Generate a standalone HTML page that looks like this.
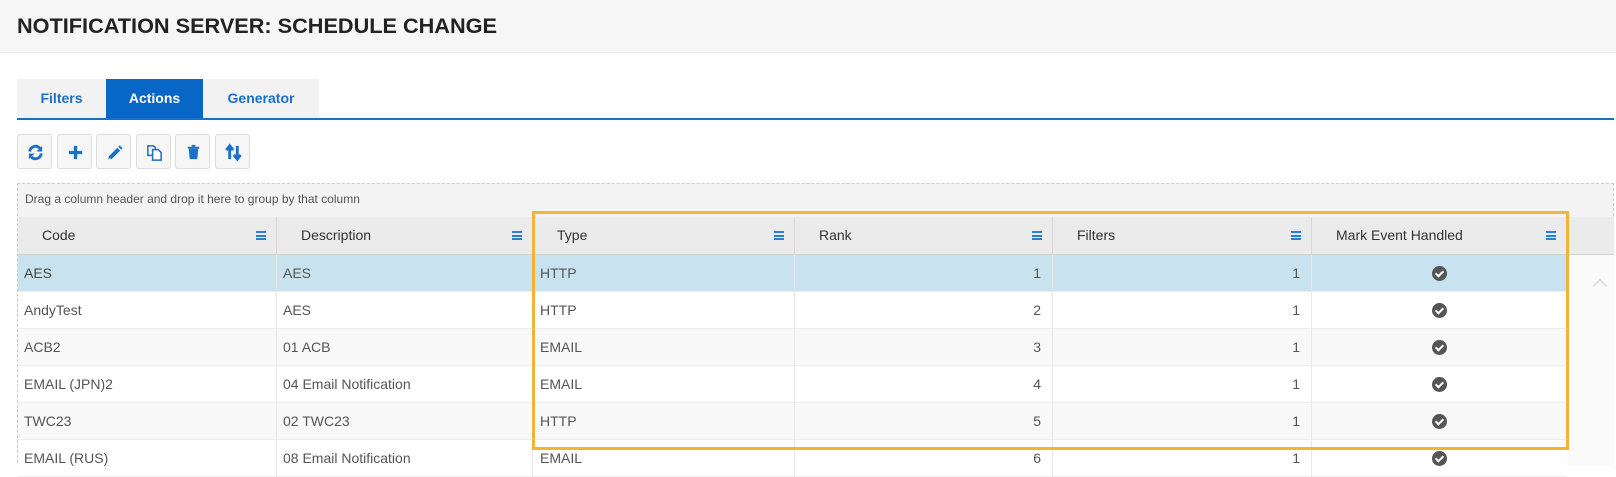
<!DOCTYPE html>
<html><head><meta charset="utf-8"><style>
*{box-sizing:border-box;margin:0;padding:0}
body{width:1616px;height:458px;overflow:hidden;background:#fff;font-family:"Liberation Sans",Arial,sans-serif;position:relative;color:#444}
.hdr{position:absolute;left:0;top:0;width:1616px;height:53px;background:#f6f6f6;border-bottom:1px solid #ececec}
.hdr h1{position:absolute;left:17px;top:13px;font-size:21.7px;font-weight:bold;color:#222;letter-spacing:0}
.tab{position:absolute;top:79px;height:39px;background:#f2f2f2;color:#1a6fc9;font-weight:bold;font-size:14px;line-height:39px;text-align:center}
.tab.act{background:#0866c6;color:#fff}
.line{position:absolute;left:17px;top:118px;width:1597px;height:2px;background:#1b6fc4}
.btn{position:absolute;top:134px;width:35px;height:35px;border:1px solid #ddd;border-radius:3px;background:#f6f6f6}
.btn svg{position:absolute;left:8px;top:8px}
.grid{position:absolute;left:17px;top:183px;width:1597px;height:280px;border:1px dashed #ccc;border-bottom:none;background:#f4f4f4}
.grp{position:absolute;left:25px;top:192px;font-size:12px;color:#555}
.th{position:absolute;top:217px;height:38px;background:#ebebeb;border-bottom:1px solid #d3d3d3;border-right:1px solid #d8d8d8;font-size:14px;color:#333;line-height:37px;padding-left:24px}
.th i{position:absolute;right:10px;top:14px;width:10px;height:9px;border-top:2px solid #2b7fd4;border-bottom:2px solid #2b7fd4}
.th i:after{content:"";position:absolute;left:0;top:1.5px;width:10px;height:2px;background:#2b7fd4}
.row{position:absolute;left:18px;width:1549px;height:37px;border-bottom:1px solid #eee}
.c{position:absolute;top:0;height:37px;line-height:37px;font-size:14px;color:#555;border-right:1px solid #e8e8e8}
.r{text-align:right;padding-right:11px}
.chk{position:absolute;left:50%;top:11px;margin-left:-8px;width:15px;height:15px;border-radius:50%;background:#555}
.chk:after{content:"";position:absolute;left:5px;top:3px;width:3px;height:6px;border:solid #fff;border-width:0 2px 2px 0;transform:rotate(45deg)}
.orange{position:absolute;left:532px;top:211px;width:1037px;height:239px;border:3px solid #f5b335}
</style></head><body>
<div class="hdr"><h1>NOTIFICATION SERVER: SCHEDULE CHANGE</h1></div>
<div class="tab" style="left:17px;width:89px">Filters</div>
<div class="tab act" style="left:106px;width:97px">Actions</div>
<div class="tab" style="left:203px;width:116px">Generator</div>
<div class="line"></div>

<div class="btn" style="left:17px"><svg width="19" height="19" viewBox="0 0 20 20"><path d="M4 9a6 6 0 0 1 10.5-3.5" stroke="#1a6fc9" stroke-width="3" fill="none"/><path d="M17 3v6h-6z" fill="#1a6fc9"/><path d="M16 11a6 6 0 0 1-10.5 3.5" stroke="#1a6fc9" stroke-width="3" fill="none"/><path d="M3 17v-6h6z" fill="#1a6fc9"/></svg></div>
<div class="btn" style="left:57px"><svg width="19" height="19" viewBox="0 0 20 20"><path d="M10 3v14M3 10h14" stroke="#1a6fc9" stroke-width="3.5"/></svg></div>
<div class="btn" style="left:96px"><svg width="19" height="19" viewBox="0 0 20 20"><path d="M5 16l-1.5 1.5 0.5-3.5L13 5l3 3-9 9z" fill="#1a6fc9"/><path d="M14 4l1.5-1.5 3 3L17 7z" fill="#1a6fc9"/></svg></div>
<div class="btn" style="left:136px"><svg width="19" height="19" viewBox="0 0 20 20"><path d="M3 3h6l2 2v8H3z" fill="none" stroke="#1a6fc9" stroke-width="1.6"/><path d="M8 7h6l3 3v8H8z" fill="#fff" stroke="#1a6fc9" stroke-width="1.6"/></svg></div>
<div class="btn" style="left:175px"><svg width="19" height="19" viewBox="0 0 20 20"><path d="M5 6h10l-1 11H6z" fill="#1a6fc9"/><rect x="4" y="4" width="12" height="2" fill="#1a6fc9"/><rect x="8" y="2" width="4" height="2" fill="#1a6fc9"/></svg></div>
<div class="btn" style="left:215px"><svg width="19" height="19" viewBox="0 0 20 20"><path d="M6 17V5M2.5 7.5L6 3l3.5 4.5" stroke="#1a6fc9" stroke-width="3" fill="none"/><path d="M14 3v12M10.5 12.5L14 17l3.5-4.5" stroke="#1a6fc9" stroke-width="3" fill="none"/></svg></div>

<div class="grid"></div>
<div class="grp">Drag a column header and drop it here to group by that column</div>
<div class="th" style="left:18px;width:259px">Code<i></i></div>
<div class="th" style="left:277px;width:256px">Description<i></i></div>
<div class="th" style="left:533px;width:262px">Type<i></i></div>
<div class="th" style="left:795px;width:258px">Rank<i></i></div>
<div class="th" style="left:1053px;width:259px">Filters<i></i></div>
<div class="th" style="left:1312px;width:255px">Mark Event Handled<i></i></div>
<div class="th" style="left:1567px;width:47px;border-right:none"></div>
<div style="position:absolute;left:1567px;top:255px;width:47px;height:210px;background:#fafafa"></div>
<div style="position:absolute;left:1595px;top:281px;width:10px;height:10px;border-left:1.5px solid #ccc;border-top:1.5px solid #ccc;transform:rotate(45deg)"></div>

<div class="row" style="top:255px;background:#c8e3ef"><div class="c" style="left:0;width:259px;padding-left:6px;color:#444">AES</div><div class="c" style="left:259px;width:256px;padding-left:6px">AES</div><div class="c" style="left:515px;width:262px;padding-left:7px">HTTP</div><div class="c r" style="left:777px;width:258px">1</div><div class="c r" style="left:1035px;width:259px">1</div><div class="c" style="left:1294px;width:255px;border:none"><span class="chk"></span></div></div>
<div class="row" style="top:292px;background:#fff"><div class="c" style="left:0;width:259px;padding-left:6px">AndyTest</div><div class="c" style="left:259px;width:256px;padding-left:6px">AES</div><div class="c" style="left:515px;width:262px;padding-left:7px">HTTP</div><div class="c r" style="left:777px;width:258px">2</div><div class="c r" style="left:1035px;width:259px">1</div><div class="c" style="left:1294px;width:255px;border:none"><span class="chk"></span></div></div>
<div class="row" style="top:329px;background:#f9f9f9"><div class="c" style="left:0;width:259px;padding-left:6px">ACB2</div><div class="c" style="left:259px;width:256px;padding-left:6px">01 ACB</div><div class="c" style="left:515px;width:262px;padding-left:7px">EMAIL</div><div class="c r" style="left:777px;width:258px">3</div><div class="c r" style="left:1035px;width:259px">1</div><div class="c" style="left:1294px;width:255px;border:none"><span class="chk"></span></div></div>
<div class="row" style="top:366px;background:#fff"><div class="c" style="left:0;width:259px;padding-left:6px">EMAIL (JPN)2</div><div class="c" style="left:259px;width:256px;padding-left:6px">04 Email Notification</div><div class="c" style="left:515px;width:262px;padding-left:7px">EMAIL</div><div class="c r" style="left:777px;width:258px">4</div><div class="c r" style="left:1035px;width:259px">1</div><div class="c" style="left:1294px;width:255px;border:none"><span class="chk"></span></div></div>
<div class="row" style="top:403px;background:#f9f9f9"><div class="c" style="left:0;width:259px;padding-left:6px">TWC23</div><div class="c" style="left:259px;width:256px;padding-left:6px">02 TWC23</div><div class="c" style="left:515px;width:262px;padding-left:7px">HTTP</div><div class="c r" style="left:777px;width:258px">5</div><div class="c r" style="left:1035px;width:259px">1</div><div class="c" style="left:1294px;width:255px;border:none"><span class="chk"></span></div></div>
<div class="row" style="top:440px;background:#fff"><div class="c" style="left:0;width:259px;padding-left:6px">EMAIL (RUS)</div><div class="c" style="left:259px;width:256px;padding-left:6px">08 Email Notification</div><div class="c" style="left:515px;width:262px;padding-left:7px">EMAIL</div><div class="c r" style="left:777px;width:258px">6</div><div class="c r" style="left:1035px;width:259px">1</div><div class="c" style="left:1294px;width:255px;border:none"><span class="chk"></span></div></div>
<div class="orange"></div>
</body></html>
